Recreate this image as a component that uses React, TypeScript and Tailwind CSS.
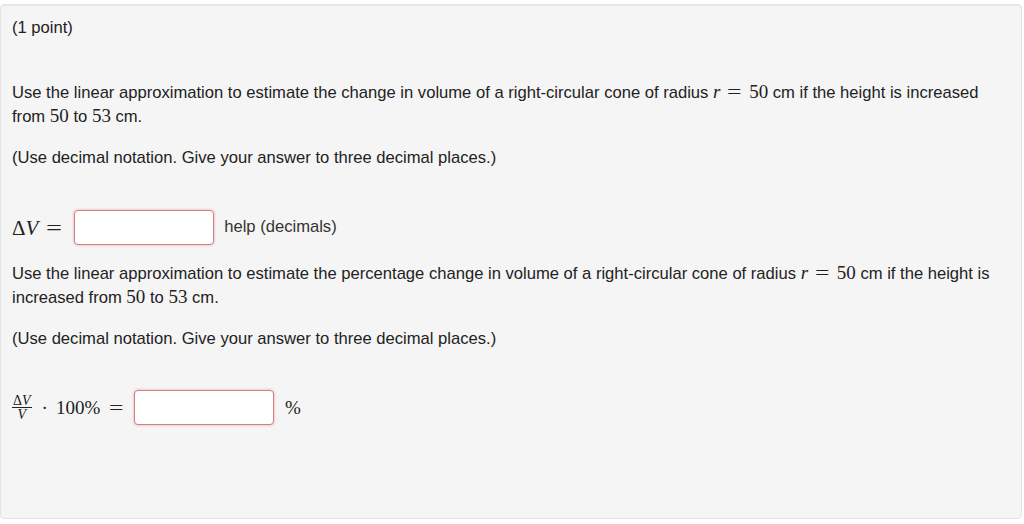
export default function App() {
  const serif =
    "inline-block font-['Liberation_Serif',serif] text-[19px] leading-[16px]";
  const equals = "inline-block scale-x-[1.35]";
  const inputCls =
    "h-[35px] w-[140px] rounded-[4px] border border-[#d48080] bg-white shadow-[0_0_3px_rgba(217,83,79,0.45)] outline-none";

  return (
    <div className="h-[524px] w-[1024px] bg-white pt-[4px] font-['Liberation_Sans',Arial,sans-serif] text-[16.6px] text-[#222]">
      <div className="h-[515px] w-[1022px] rounded-[4px] border border-[#e3e3e3] bg-[#f5f5f5] px-[11px] pt-[11px] shadow-[inset_0_1px_1px_rgba(0,0,0,0.05)]">
        <p className="leading-[24px]">(1 point)</p>

        <p className="mt-[41px] leading-[24px]">
          Use the linear approximation to estimate the change in volume of a
          right-circular cone of radius{" "}
          <span className={serif}>
            <i>r</i>
            <span className={`mx-[9px] ${equals}`}>=</span>50
          </span>{" "}
          cm if the height is increased from <span className={serif}>50</span>{" "}
          to <span className={serif}>53</span> cm.
        </p>

        <p className="mt-[17px] leading-[24px]">
          (Use decimal notation. Give your answer to three decimal places.)
        </p>

        <div className="mt-[40px] flex items-center">
          <span className="font-['Liberation_Serif',serif] text-[21px] leading-[20px]">
            Δ<i>V</i>
            <span className={`ml-[10px] ${equals}`}>=</span>
          </span>
          <input className={`ml-[14px] ${inputCls}`} />
          <span className="ml-[10px] text-[#333]">help (decimals)</span>
        </div>

        <p className="mt-[17px] leading-[24px]">
          Use the linear approximation to estimate the percentage change in
          volume of a right-circular cone of radius{" "}
          <span className={serif}>
            <i>r</i>
            <span className={`mx-[9px] ${equals}`}>=</span>50
          </span>{" "}
          cm if the height is increased from <span className={serif}>50</span>{" "}
          to <span className={serif}>53</span> cm.
        </p>

        <p className="mt-[17px] leading-[24px]">
          (Use decimal notation. Give your answer to three decimal places.)
        </p>

        <div className="mt-[39px] flex items-center">
          <span className="inline-flex flex-col items-center font-['Liberation_Serif',serif] text-[14px] leading-[13px]">
            <span className="px-[1px]">
              Δ<i>V</i>
            </span>
            <span className="w-full border-t border-[#222]" />
            <span>
              <i>V</i>
            </span>
          </span>
          <span className={`ml-[10px] ${serif}`}>
            ·<span className="ml-[8px]">100%</span>
            <span className={`ml-[11px] ${equals}`}>=</span>
          </span>
          <input className={`ml-[12px] ${inputCls}`} />
          <span className={`ml-[11px] ${serif}`}>%</span>
        </div>
      </div>
    </div>
  );
}
